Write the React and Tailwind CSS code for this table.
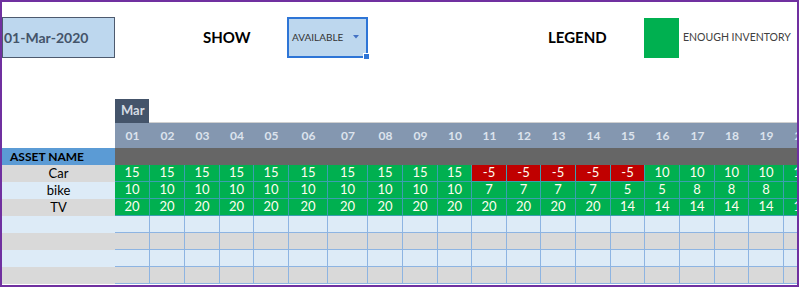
import React from 'react';

const FONT = { fontFamily: 'Lato, "Open Sans", sans-serif' };

// column widths, day 01 .. 20 (last one runs off the edge)
const COLS = [
  'w-[35px]', 'w-[35px]', 'w-[35px]', 'w-[34px]', 'w-[35px]',
  'w-[39px]', 'w-[40px]', 'w-[35px]', 'w-[35px]', 'w-[34px]',
  'w-[35px]', 'w-[34px]', 'w-[35px]', 'w-[35px]', 'w-[34px]',
  'w-[35px]', 'w-[35px]', 'w-[34px]', 'w-[35px]', 'w-[35px]',
];

const DAYS = COLS.map((_, i) => String(i + 1).padStart(2, '0'));

const ASSETS = [
  { name: 'Car', values: [15, 15, 15, 15, 15, 15, 15, 15, 15, 15, -5, -5, -5, -5, -5, 10, 10, 10, 10, 10] },
  { name: 'bike', values: [10, 10, 10, 10, 10, 10, 10, 10, 10, 10, 7, 7, 7, 7, 5, 5, 8, 8, 8, 8] },
  { name: 'TV', values: [20, 20, 20, 20, 20, 20, 20, 20, 20, 20, 20, 20, 20, 20, 14, 14, 14, 14, 14, 14] },
];

const EMPTY_ROWS = 4;

const Header = () => (
  <div className="flex items-start h-[97px] pt-[15px]">
    <div className="w-[113px] h-[41px] shrink-0 flex items-center pl-[1px] bg-[#bdd7ee] border-[1.5px] border-[#4d5a6e]">
      <span className="text-[14px] font-bold text-[#44546a]">01-Mar-2020</span>
    </div>
    <div className="w-[88px] shrink-0" />
    <div className="w-[84px] h-[41px] shrink-0 flex items-center">
      <span className="text-[15px] font-bold text-black">SHOW</span>
    </div>
    <div className="relative w-[81px] h-[41px] shrink-0 flex items-center justify-between pl-[3px] pr-[7px] bg-[#bdd7ee] border-2 border-[#2e75d6]">
      <span className="text-[10px] text-[#333]">AVAILABLE</span>
      <svg width="6" height="4" viewBox="0 0 6 4" className="mb-[1px]">
        <path d="M0 0 L6 0 L3 3.5 Z" fill="#4472c4" />
      </svg>
      <div className="absolute -right-[4px] -bottom-[4px] w-[7px] h-[7px] bg-[#2e75d6] border border-white" />
    </div>
    <div className="w-[180px] shrink-0" />
    <div className="w-[96px] h-[41px] shrink-0 flex items-center">
      <span className="text-[15px] font-bold text-black">LEGEND</span>
    </div>
    <div className="w-[35px] h-[40px] mt-[1px] shrink-0 bg-[#00b050]" />
    <div className="h-[41px] ml-[4px] flex items-center whitespace-nowrap">
      <span className="text-[10.5px] text-[#404040]">ENOUGH INVENTORY</span>
    </div>
  </div>
);

const Grid = () => (
  <div className="flex flex-col">
    {/* month */}
    <div className="flex h-[24px]">
      <div className="w-[113px] shrink-0" />
      <div className="w-[34px] shrink-0 bg-[#44546a] flex items-center pl-[6px]">
        <span className="text-[13px] font-bold text-[#d6dce4]">Mar</span>
      </div>
      <div className="flex-1 border-b border-[#d0d0d0]" />
    </div>
    {/* days */}
    <div className="flex h-[25px]">
      <div className="w-[113px] shrink-0" />
      {DAYS.map((d, i) => (
        <div key={d} className={`${COLS[i]} shrink-0 bg-[#8497b0] flex items-center justify-center`}>
          <span className="text-[12px] font-bold text-[#dce3ed]">{d}</span>
        </div>
      ))}
    </div>
    {/* column title */}
    <div className="flex h-[17px]">
      <div className="w-[113px] shrink-0 bg-[#5b9bd5] flex items-center pl-[8px]">
        <span className="text-[12px] font-bold text-black">ASSET NAME</span>
      </div>
      <div className="flex-1 bg-[#666666]" />
    </div>
    {ASSETS.map((a, r) => (
      <div key={a.name} className="flex h-[17px]">
        <div className={`w-[113px] shrink-0 flex items-center justify-center ${r % 2 === 0 ? 'bg-[#d9d9d9]' : 'bg-[#ddebf7]'}`}>
          <span className="text-[13px] text-black">{a.name}</span>
        </div>
        {a.values.map((v, i) => (
          <div
            key={i}
            className={`${COLS[i]} shrink-0 flex items-center justify-center border-r border-b border-[#3c9fb0] ${v < 0 ? 'bg-[#c00000]' : 'bg-[#00b050]'}`}
          >
            <span className="text-[13px] text-[#fffdf0]">{v}</span>
          </div>
        ))}
      </div>
    ))}
    {Array.from({ length: EMPTY_ROWS }).map((_, r) => (
      <div key={r} className="flex h-[17px]">
        <div className={`w-[113px] shrink-0 ${r % 2 === 0 ? 'bg-[#ddebf7]' : 'bg-[#d9d9d9]'}`} />
        {COLS.map((w, i) => (
          <div
            key={i}
            className={`${w} shrink-0 border-r border-b border-[#8db4e2] ${r % 2 === 0 ? 'bg-[#ddebf7]' : 'bg-[#d9d9d9]'}`}
          />
        ))}
      </div>
    ))}
  </div>
);

export default function App() {
  return (
    <div
      className="w-[799px] h-[287px] overflow-hidden bg-white border-2 border-[#7030a0]"
      style={FONT}
    >
      <Header />
      <Grid />
    </div>
  );
}
